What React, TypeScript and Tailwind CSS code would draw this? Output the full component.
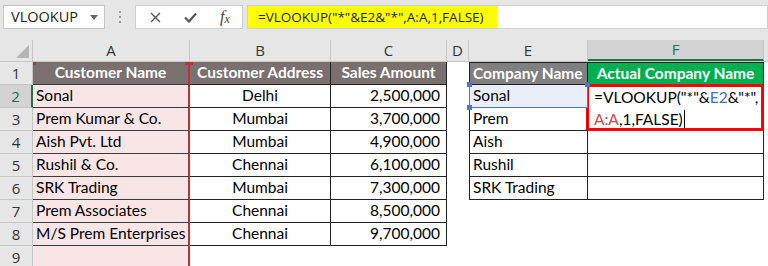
import React from 'react'

const cellFont = { fontFamily: 'Lato, "Open Sans", sans-serif' }

const rows = [
  { n: 2, a: 'Sonal', b: 'Delhi', c: '2,500,000', e: 'Sonal' },
  { n: 3, a: 'Prem Kumar & Co.', b: 'Mumbai', c: '3,700,000', e: 'Prem' },
  { n: 4, a: 'Aish Pvt. Ltd', b: 'Mumbai', c: '4,900,000', e: 'Aish' },
  { n: 5, a: 'Rushil & Co.', b: 'Chennai', c: '6,100,000', e: 'Rushil' },
  { n: 6, a: 'SRK Trading', b: 'Mumbai', c: '7,300,000', e: 'SRK Trading' },
  { n: 7, a: 'Prem Associates', b: 'Chennai', c: '8,500,000', e: '' },
  { n: 8, a: 'M/S Prem Enterprises', b: 'Chennai', c: '9,700,000', e: '' },
]

function RowNum({ n, active }: { n: number; active?: boolean }) {
  return (
    <div
      className={
        'flex items-center justify-center border-b border-r text-[15px] ' +
        (active
          ? 'bg-[#d3d3d3] text-[#217346] border-b-[#c6c6c6] border-r-2 border-r-[#217346]'
          : 'bg-[#e6e6e6] text-[#333] border-b-[#c6c6c6] border-r-[#c6c6c6]')
      }
      style={{ fontFamily: '"Open Sans", sans-serif' }}
    >
      {n}
    </div>
  )
}

function FormulaBar() {
  return (
    <div className="h-[40px] bg-[#e6e6e6] flex items-start pt-[5px]" style={{ fontFamily: '"Open Sans", sans-serif' }}>
      <div className="ml-[3px] w-[102px] h-[24px] bg-white border border-[#c6c6c6] flex items-center justify-between pl-[7px] pr-[6px] text-[14.5px] text-[#222]">
        <span>VLOOKUP</span>
        <svg width="8" height="5" viewBox="0 0 8 5"><path d="M0 0h8L4 5z" fill="#666" /></svg>
      </div>
      <div className="w-[30px] h-[24px] flex flex-col items-center justify-center gap-[3px]">
        <span className="w-[2px] h-[2px] bg-[#9a9a9a]" />
        <span className="w-[2px] h-[2px] bg-[#9a9a9a]" />
        <span className="w-[2px] h-[2px] bg-[#9a9a9a]" />
      </div>
      <div className="w-[108px] h-[24px] bg-white border border-[#d0d0d0] flex items-center">
        <div className="w-[36px] flex justify-center pl-[2px]">
          <svg width="11" height="11" viewBox="0 0 11 11"><path d="M1 1l9 9M10 1l-9 9" stroke="#555" strokeWidth="1.4" /></svg>
        </div>
        <div className="w-[36px] flex justify-center">
          <svg width="13" height="11" viewBox="0 0 13 11"><path d="M1 5.5l4 4L12 1.5" stroke="#555" strokeWidth="2.2" fill="none" /></svg>
        </div>
        <div className="w-[34px] flex justify-center text-[16px] italic text-[#444] leading-none" style={{ fontFamily: '"Liberation Serif", serif' }}>
          f<span className="text-[12px] self-end">x</span>
        </div>
      </div>
      <div className="ml-[4px] flex-1 h-[24px] bg-white border border-[#d0d0d0] flex">
        <div className="w-[249px] h-full bg-[#ffff00] flex items-center pl-[10px] text-[13.5px] text-[#222]">
          =VLOOKUP("*"&amp;E2&amp;"*",A:A,1,FALSE)
        </div>
      </div>
    </div>
  )
}

function ColHeaders() {
  const cols = [
    { l: 'A', w: 'w-[157px]' },
    { l: 'B', w: 'w-[141px]' },
    { l: 'C', w: 'w-[116px]' },
    { l: 'D', w: 'w-[22px]' },
    { l: 'E', w: 'w-[119px]' },
  ]
  return (
    <div className="h-[22px] flex bg-[#e6e6e6] border-b border-[#c6c6c6]" style={{ fontFamily: '"Open Sans", sans-serif' }}>
      <div className="w-[33px] flex items-end justify-end border-r border-[#c6c6c6] pr-[3px] pb-[3px]">
        <svg width="13" height="13" viewBox="0 0 13 13"><path d="M13 0v13H0z" fill="#b5b5b5" /></svg>
      </div>
      {cols.map((c) => (
        <div key={c.l} className={c.w + ' flex items-center justify-center border-r border-[#c6c6c6] text-[15px] text-[#333]'}>
          {c.l}
        </div>
      ))}
      <div className="w-[176px] flex items-center justify-center border-r border-[#c6c6c6] bg-[#d3d3d3] border-b-2 border-b-[#217346] text-[15px] text-[#217346]">
        F
      </div>
      <div className="flex-1" />
    </div>
  )
}

export default function App() {
  return (
    <div className="w-[768px] h-[266px] overflow-hidden bg-white text-[15.5px] text-black" style={cellFont}>
      <FormulaBar />
      <ColHeaders />
      <div className="grid grid-cols-[33px_157px_141px_116px_22px_119px_176px_1fr] auto-rows-[23px]">
        {/* row 1 */}
        <RowNum n={1} />
        <div className="relative bg-[#7b7070] text-white font-bold flex items-center justify-center border-b border-[#3c3c3c] border-r-2 border-r-[#c0303a]">
          Customer Name
          <span className="absolute left-0 top-0 w-[3px] h-[3px] bg-[#c0303a]" />
          <span className="absolute right-[-5px] top-0 w-[8px] h-[3px] bg-[#c0303a]" />
        </div>
        <div className="bg-[#7b7070] text-white font-bold flex items-center justify-center border-b border-r border-[#222]">Customer Address</div>
        <div className="bg-[#7b7070] text-white font-bold flex items-center justify-center border-b border-r border-[#222]">Sales Amount</div>
        <div />
        <div className="bg-[#808080] text-white font-bold flex items-center pl-[3px] border border-[#222]">Company Name</div>
        <div className="bg-[#00b050] text-white font-bold flex items-center justify-center border-y border-r border-[#222]">Actual Company Name</div>
        <div />

        {rows.map((r) => (
          <React.Fragment key={r.n}>
            <RowNum n={r.n} active={r.n === 2} />
            <div className="bg-[#f8e5e5] flex items-center pl-[3px] border-b border-[#3c3c3c] border-r-2 border-r-[#c0303a] whitespace-nowrap">{r.a}</div>
            <div className="flex items-center justify-center border-b border-r border-[#222]">{r.b}</div>
            <div className="flex items-center justify-end pr-[6px] border-b border-r border-[#222]">{r.c}</div>
            <div />
            {r.n <= 6 ? (
              r.n === 2 ? (
                <div className="relative bg-[#e9eef8] flex items-center pl-[3px] border border-t-0 border-[#4a78c8]">
                  {r.e}
                  <span className="absolute left-[-3px] top-[-3px] w-[5px] h-[5px] bg-[#4a78c8]" />
                  <span className="absolute left-[-3px] bottom-[-3px] w-[5px] h-[5px] bg-[#4a78c8]" />
                  <span className="absolute right-[-3px] top-[-3px] w-[5px] h-[5px] bg-[#4a78c8]" />
                </div>
              ) : (
                <div className="flex items-center pl-[3px] border-x border-b border-[#222]">{r.e}</div>
              )
            ) : (
              <div />
            )}
            {r.n === 2 && (
              <div className="row-span-2 border-[3px] border-[#ff0000] ml-[-2px] mt-[-1px] flex flex-col justify-center pl-[5px] leading-[22px]">
                <div>
                  =VLOOKUP("*"&amp;<span className="text-[#3a6fc8]">E2</span>&amp;"*",
                </div>
                <div className="flex items-center">
                  <span className="text-[#d04848]">A:A</span>,1,FALSE)
                  <span className="inline-block w-[1px] h-[18px] bg-black ml-[1px]" />
                </div>
              </div>
            )}
            {r.n >= 4 && r.n <= 6 && <div className="border-b border-r border-[#222]" />}
            {r.n >= 7 && <div />}
            <div />
          </React.Fragment>
        ))}

        {/* row 9 */}
        <RowNum n={9} />
        <div className="bg-[#f8e5e5] border-r-2 border-r-[#c0303a]" />
        <div />
        <div />
        <div />
        <div />
        <div />
        <div />
      </div>
    </div>
  )
}
